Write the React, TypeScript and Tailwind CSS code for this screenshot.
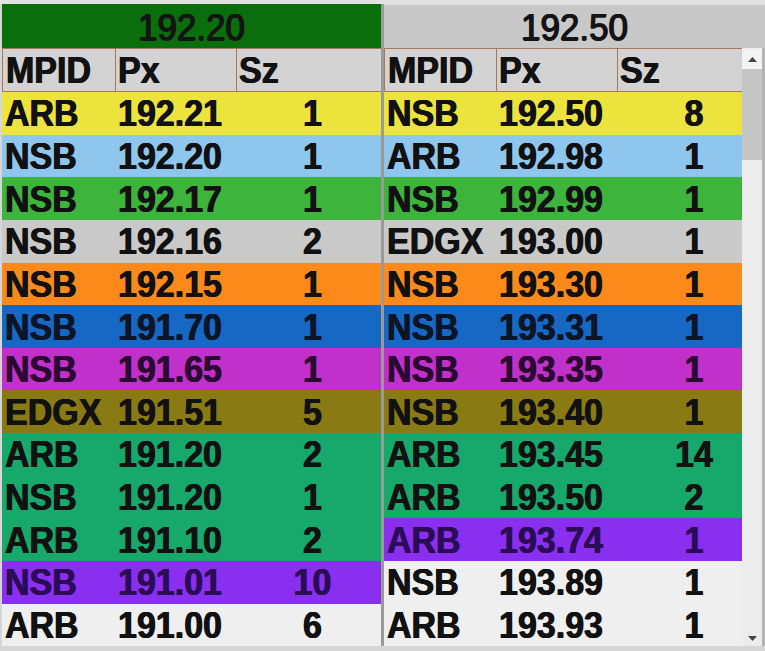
type Row = { mpid: string; px: string; sz: string; bg: string; fg?: string };

const bids: Row[] = [
  { mpid: "ARB", px: "192.21", sz: "1", bg: "bg-[#ede33d]" },
  { mpid: "NSB", px: "192.20", sz: "1", bg: "bg-[#8fc6ee]" },
  { mpid: "NSB", px: "192.17", sz: "1", bg: "bg-[#3db53d]" },
  { mpid: "NSB", px: "192.16", sz: "2", bg: "bg-[#c9c9c9]" },
  { mpid: "NSB", px: "192.15", sz: "1", bg: "bg-[#fb8a1b]" },
  { mpid: "NSB", px: "191.70", sz: "1", bg: "bg-[#1767c4]", fg: "text-[#0b1526]" },
  { mpid: "NSB", px: "191.65", sz: "1", bg: "bg-[#c230cb]", fg: "text-[#2a0a30]" },
  { mpid: "EDGX", px: "191.51", sz: "5", bg: "bg-[#8a7a13]" },
  { mpid: "ARB", px: "191.20", sz: "2", bg: "bg-[#17a86c]" },
  { mpid: "NSB", px: "191.20", sz: "1", bg: "bg-[#17a86c]" },
  { mpid: "ARB", px: "191.10", sz: "2", bg: "bg-[#17a86c]" },
  { mpid: "NSB", px: "191.01", sz: "10", bg: "bg-[#8a2ef0]", fg: "text-[#2b0d55]" },
  { mpid: "ARB", px: "191.00", sz: "6", bg: "bg-[#efefef]" },
];

const asks: Row[] = [
  { mpid: "NSB", px: "192.50", sz: "8", bg: "bg-[#ede33d]" },
  { mpid: "ARB", px: "192.98", sz: "1", bg: "bg-[#8fc6ee]" },
  { mpid: "NSB", px: "192.99", sz: "1", bg: "bg-[#3db53d]" },
  { mpid: "EDGX", px: "193.00", sz: "1", bg: "bg-[#c9c9c9]" },
  { mpid: "NSB", px: "193.30", sz: "1", bg: "bg-[#fb8a1b]" },
  { mpid: "NSB", px: "193.31", sz: "1", bg: "bg-[#1767c4]", fg: "text-[#0b1526]" },
  { mpid: "NSB", px: "193.35", sz: "1", bg: "bg-[#c230cb]", fg: "text-[#2a0a30]" },
  { mpid: "NSB", px: "193.40", sz: "1", bg: "bg-[#8a7a13]" },
  { mpid: "ARB", px: "193.45", sz: "14", bg: "bg-[#17a86c]" },
  { mpid: "ARB", px: "193.50", sz: "2", bg: "bg-[#17a86c]" },
  { mpid: "ARB", px: "193.74", sz: "1", bg: "bg-[#8a2ef0]", fg: "text-[#2b0d55]" },
  { mpid: "NSB", px: "193.89", sz: "1", bg: "bg-[#efefef]" },
  { mpid: "ARB", px: "193.93", sz: "1", bg: "bg-[#efefef]" },
];

const font = { fontFamily: '"Liberation Sans", Arial, sans-serif' };

// blurry capture makes the glyphs look heavier than plain bold
const heavy = "[text-shadow:0.5px_0_0_currentColor,-0.5px_0_0_currentColor]";
const medium = "[text-shadow:0.7px_0_0_currentColor,-0.7px_0_0_currentColor,0_0.5px_0_currentColor]";

function BookTable({ rows, cols }: { rows: Row[]; cols: [string, string, string] }) {
  const [mpidW, pxW, szCls] = cols;
  return (
    <div className="flex flex-col">
      <div className={`flex h-[44px] border-y border-[#a8785a] bg-[#d3d3d3] text-[34px] font-bold leading-none text-[#111] ${heavy}`}>
        <div className={`${mpidW} flex items-center border-l border-[#a8785a] pl-[3px]`}>
          <span className="inline-block scale-y-[1.08]">MPID</span>
        </div>
        <div className={`${pxW} flex items-center border-l border-[#a8785a] pl-[2px]`}>
          <span className="inline-block scale-y-[1.08]">Px</span>
        </div>
        <div className="flex flex-1 items-center border-l border-[#a8785a] pl-[2px]">
          <span className="inline-block scale-y-[1.08]">Sz</span>
        </div>
      </div>
      {rows.map((r, i) => (
        <div
          key={i}
          className={`flex h-[42.65px] items-center text-[34px] font-bold leading-none ${heavy} ${r.bg} ${r.fg ?? "text-[#111]"}`}
        >
          <div className={`${mpidW} scale-y-[1.08] pl-[3px]`}>{r.mpid}</div>
          <div className={`${pxW} scale-y-[1.08] pl-[3px]`}>{r.px}</div>
          <div className={`flex-1 scale-y-[1.08] text-center ${szCls}`}>{r.sz}</div>
        </div>
      ))}
    </div>
  );
}

export default function App() {
  return (
    <div className="h-[651px] w-[765px] overflow-hidden bg-[#d6d6d6]" style={font}>
      <div className="h-[4px] bg-[#e2e2e2]" />
      <div className="flex pl-[2px]">
        <div className="flex w-[379px] flex-col">
          <div className={`flex h-[44px] items-center justify-center bg-[#0a6e0c] text-[35px] leading-none text-[#141414] ${medium}`}>
            <span className="inline-block scale-y-[1.08]">192.20</span>
          </div>
          <BookTable rows={bids} cols={["w-[113px]", "w-[121px]", "pl-[8px]"]} />
        </div>
        <div className="w-[3px] bg-[#9a9a9a]" />
        <div className="flex flex-1 flex-col">
          <div className={`flex h-[44px] items-center justify-center border-t border-[#dedede] bg-[#c8c8c8] text-[35px] leading-none text-[#141414] ${medium}`}>
            <span className="inline-block scale-y-[1.08]">192.50</span>
          </div>
          <div className="flex">
            <div className="w-[358px]">
              <BookTable rows={asks} cols={["w-[112px]", "w-[121px]", "pl-[29px]"]} />
            </div>
            <div className="flex w-[20px] flex-col bg-[#ececec] pt-[1px]">
              <div className="flex h-[20px] items-center justify-center bg-[#f3f3f3]">
                <svg width="9" height="5" viewBox="0 0 9 5">
                  <path d="M0 5 L4.5 0 L9 5 Z" fill="#444" />
                </svg>
              </div>
              <div className="h-[91px] bg-[#c6c6c6]" />
              <div className="flex-1" />
              <div className="flex h-[16px] items-center justify-center">
                <svg width="9" height="5" viewBox="0 0 9 5">
                  <path d="M0 0 L4.5 5 L9 0 Z" fill="#444" />
                </svg>
              </div>
            </div>
            <div className="w-[3px] bg-[#b4b4b4]" />
          </div>
        </div>
      </div>
    </div>
  );
}
